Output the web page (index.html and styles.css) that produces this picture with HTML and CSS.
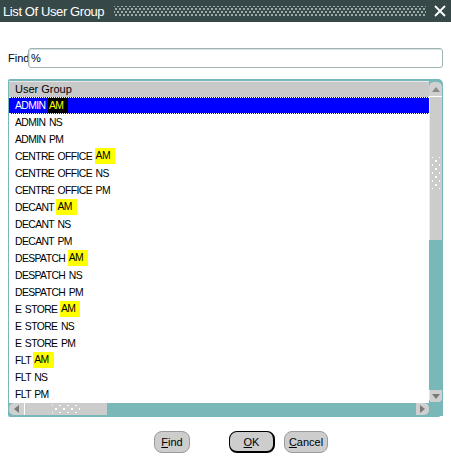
FILE: index.html
```html
<!DOCTYPE html>
<html>
<head>
<meta charset="utf-8">
<link rel="stylesheet" href="styles.css">
</head>
<body>
<div class="window">
  <div class="titlebar">
    <span class="title">List Of User Group</span>
    <span class="grip"></span>
    <svg class="close" width="12" height="12" viewBox="0 0 12 12"><path d="M1 1 L11 11 M11 1 L1 11" stroke="#fff" stroke-width="1.8" fill="none"/></svg>
  </div>
  <div class="content">
    <div class="find-row"><span class="find-label">Find</span><div class="find-input">%</div></div>
    <div class="listbox">
      <div class="list-area">
        <div class="list-header">User Group</div>
        <div class="row selected">ADMIN <span class="hl">AM</span></div>
        <div class="row">ADMIN NS</div>
        <div class="row">ADMIN PM</div>
        <div class="row">CENTRE OFFICE <span class="hl">AM</span></div>
        <div class="row">CENTRE OFFICE NS</div>
        <div class="row">CENTRE OFFICE PM</div>
        <div class="row">DECANT <span class="hl">AM</span></div>
        <div class="row">DECANT NS</div>
        <div class="row">DECANT PM</div>
        <div class="row">DESPATCH <span class="hl">AM</span></div>
        <div class="row">DESPATCH NS</div>
        <div class="row">DESPATCH PM</div>
        <div class="row">E STORE <span class="hl">AM</span></div>
        <div class="row">E STORE NS</div>
        <div class="row">E STORE PM</div>
        <div class="row">FLT <span class="hl">AM</span></div>
        <div class="row">FLT NS</div>
        <div class="row">FLT PM</div>
      </div>
      <div class="vscroll">
        <div class="arrow up"><svg width="8" height="5" viewBox="0 0 8 5"><path d="M0 5 L4 0 L8 5 Z" fill="#8a8a8a"/></svg></div>
        <div class="vthumb"><span class="vdots"></span></div>
        <div class="vtrack"></div>
        <div class="arrow down"><svg width="8" height="5" viewBox="0 0 8 5"><path d="M0 0 L8 0 L4 5 Z" fill="#7a7a7a"/></svg></div>
      </div>
      <div class="hscroll">
        <div class="harrow left"><svg width="5" height="8" viewBox="0 0 5 8"><path d="M5 0 L5 8 L0 4 Z" fill="#7a7a7a"/></svg></div>
        <div class="hthumb"><span class="hdots"></span></div>
        <div class="htrack"></div>
        <div class="harrow right"><svg width="5" height="8" viewBox="0 0 5 8"><path d="M0 0 L5 4 L0 8 Z" fill="#7a7a7a"/></svg></div>
      </div>
      <div class="corner"></div>
    </div>
    <div class="buttons">
      <div class="btn btn-find"><u>F</u>ind</div>
      <div class="btn btn-ok"><u>O</u>K</div>
      <div class="btn btn-cancel"><u>C</u>ancel</div>
    </div>
  </div>
</div>
</body>
</html>
```
FILE: styles.css
```css
html, body {
  margin: 0;
  padding: 0;
  background: #ffffff;
}
body {
  font-family: "Liberation Sans", Arial, sans-serif;
  font-size: 11px;
  color: #000;
}
.window {
  width: 451px;
  height: 462px;
  background: #fff;
  overflow: hidden;
}
.titlebar {
  height: 22px;
  background: #374848;
  display: flex;
  align-items: center;
  padding: 0 5px 0 3px;
  box-sizing: border-box;
}
.title {
  color: #fff;
  font-size: 13px;
  letter-spacing: -0.4px;
  white-space: nowrap;
}
.grip {
  flex: 1;
  height: 11px;
  margin: 1px 8px 0 10px;
  background-image:
    radial-gradient(circle, #a0adad 0.7px, transparent 1px),
    radial-gradient(circle, #a0adad 0.7px, transparent 1px);
  background-size: 4px 6px, 4px 6px;
  background-position: 0 0, 2px 3px;
}
.close {
  display: block;
}
.content {
  padding: 26px 8px 0 8px;
}
.find-row {
  display: flex;
  align-items: center;
  height: 20px;
}
.find-label {
  width: 20px;
}
.find-input {
  flex: 1;
  height: 20px;
  box-sizing: border-box;
  border: 1px solid #a0b4b4;
  border-radius: 3px;
  box-shadow: inset 1px 1px 0 #d8e4e4;
  padding: 2px 0 0 2px;
  line-height: 15px;
}
.listbox {
  margin-top: 11px;
  width: 435px;
  height: 338px;
  box-sizing: border-box;
  background: #78b8b8;
  border-radius: 2px 5px 5px 2px;
  padding: 2px 0 1px 1px;
  display: grid;
  grid-template-columns: 420px 14px;
  grid-template-rows: 322px 13px;
}
.list-area {
  background: #fff;
  overflow: hidden;
}
.list-header {
  height: 16px;
  background: #c9c9c9;
  border-top: 1px solid #e8e8e8;
  box-sizing: border-box;
  padding-left: 6px;
  line-height: 15px;
}
.row {
  height: 17px;
  line-height: 17px;
  padding-left: 6px;
  white-space: nowrap;
  box-sizing: border-box;
  font-size: 10.4px;
  letter-spacing: -0.6px;
  word-spacing: 1.2px;
}
.row.selected {
  background: #0000ff;
  color: #fff;
  border-top: 1px dotted #ffffff;
  border-bottom: 1px dotted #ffffff;
  line-height: 15px;
}
.hl {
  display: inline-block;
  background: #ffff00;
  height: 16px;
  line-height: 16px;
  padding: 0 5px 0 1px;
  margin-left: -1px;
  vertical-align: top;
}
.selected .hl {
  background: #000;
  color: #ffff00;
  height: 15px;
  line-height: 15px;
}
.vscroll {
  display: flex;
  flex-direction: column;
  padding: 1px 1px 1px 0;
}
.arrow {
  height: 14px;
  background: #d0d0d0;
  display: flex;
  align-items: center;
  justify-content: center;
}
.arrow.up {
  border-radius: 5px 5px 0 0;
  border-bottom: 1px solid #fff;
}
.arrow.down {
  height: 12px;
  border-radius: 0 0 4px 4px;
  border-left: 1px solid #e6e6e6;
}
.vthumb {
  height: 143px;
  background: #cccccc;
  border-left: 1px solid #ececec;
  display: flex;
  align-items: center;
  justify-content: center;
}
.vdots {
  width: 8px;
  height: 32px;
  margin-top: 8px;
  background-image:
    radial-gradient(circle, #fff 0.9px, transparent 1.2px),
    radial-gradient(circle, #fff 0.9px, transparent 1.2px);
  background-size: 8px 8px, 8px 8px;
  background-position: 0 0, 4px 4px;
}
.vtrack {
  flex: 1;
}
.hscroll {
  display: flex;
  padding: 0 0 1px 0;
}
.harrow {
  width: 15px;
  background: #d0d0d0;
  display: flex;
  align-items: center;
  justify-content: center;
}
.harrow.left {
  border-radius: 5px 0 0 5px;
  border-right: 1px solid #fff;
}
.harrow.right {
  width: 13px;
  border-radius: 0 5px 5px 0;
}
.hthumb {
  width: 82px;
  background: #cccccc;
  display: flex;
  align-items: center;
  justify-content: center;
}
.hdots {
  width: 28px;
  height: 8px;
  background-image:
    radial-gradient(circle, #fff 0.9px, transparent 1.2px),
    radial-gradient(circle, #fff 0.9px, transparent 1.2px);
  background-size: 8px 8px, 8px 8px;
  background-position: 0 0, 4px 4px;
}
.htrack {
  flex: 1;
}
.corner {
  background: #78b8b8;
}
.buttons {
  display: flex;
  margin-top: 14px;
  padding-left: 146px;
  align-items: center;
}
.btn {
  height: 22px;
  box-sizing: border-box;
  background: #cdcdcd;
  border: 1px solid #9a9a9a;
  border-radius: 8px;
  line-height: 20px;
  text-align: center;
}
.btn-find {
  width: 36px;
}
.btn-ok {
  width: 46px;
  margin-left: 39px;
  border-color: #000;
  border-width: 1px 2px 2px 1px;
}
.btn-cancel {
  width: 44px;
  margin-left: 9px;
}
```
